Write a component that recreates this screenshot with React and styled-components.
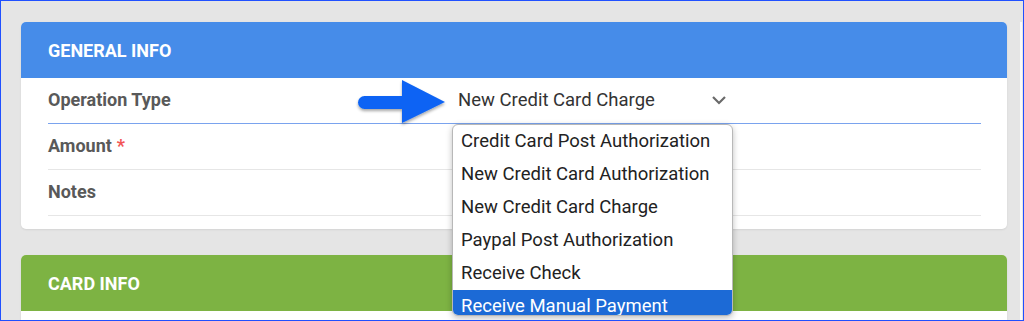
import React from "react";
import styled, { createGlobalStyle } from "styled-components";

const Global = createGlobalStyle`
  html, body { margin: 0; padding: 0; background: #e5e5e5; }
  * { box-sizing: border-box; }
  body { font-family: Roboto, "Noto Sans", "Liberation Sans", sans-serif; }
`;

const Frame = styled.div`
  width: 1024px;
  height: 321px;
  border: 1px solid #2050ff;
  background: #e5e5e5;
  overflow: hidden;
  display: flex;
`;

const Main = styled.div`
  flex: 1;
  padding: 21px 13px 0 20px;
  display: flex;
  flex-direction: column;
  gap: 26px;
`;

const ScrollStrip = styled.div`
  width: 2px;
  margin: 21px 1px 0 0;
  background: #fafafa;
`;

const Card = styled.section`
  background: #fff;
  border-radius: 5px;
  box-shadow: 0 1px 2px rgba(0, 0, 0, 0.08);
  padding-bottom: ${(p) => p.$pb || 0}px;
  flex-shrink: 0;
`;

const CardHeader = styled.header`
  height: 56px;
  border-radius: 5px 5px 0 0;
  background: ${(p) => p.$color};
  color: #fff;
  font-weight: 700;
  font-size: 18px;
  display: flex;
  align-items: center;
  padding-left: 27px;
`;

const CardBody = styled.div`
  padding: 0 26px 0 27px;
  min-height: ${(p) => p.$minH || 0}px;
`;

const Row = styled.div`
  height: 46px;
  display: grid;
  grid-template-columns: 404px 283px 1fr;
  align-items: center;
  padding-bottom: 2px;
  border-bottom: 1px solid ${(p) => (p.$active ? "#7aa3ee" : "#e6e6e6")};
  position: relative;
`;

const Label = styled.div`
  font-size: 18px;
  font-weight: 700;
  color: #595959;
`;

const Req = styled.span`
  color: #f25555;
  margin-left: 5px;
`;

const Select = styled.div`
  display: flex;
  align-items: center;
  justify-content: space-between;
  padding: 0 8px 0 6px;
  font-size: 18.5px;
  color: #333;
  position: relative;
`;

const Chevron = styled.svg`
  width: 16px;
  height: 12px;
`;

const Menu = styled.ul`
  position: absolute;
  top: 46px;
  left: 404px;
  width: 281px;
  max-height: 192px;
  overflow: hidden;
  margin: 0;
  padding: 0;
  list-style: none;
  background: #fff;
  border: 1px solid #b8b8b8;
  border-radius: 6px;
  box-shadow: 0 2px 6px rgba(0, 0, 0, 0.25);
  z-index: 5;
`;

const Item = styled.li`
  height: 33px;
  display: flex;
  align-items: center;
  padding: 0 0 2px 8px;
  font-size: 18.5px;
  color: ${(p) => (p.$selected ? "#fff" : "#222")};
  background: ${(p) => (p.$selected ? "#1c6ad6" : "transparent")};
`;

const Pointer = styled.svg`
  position: absolute;
  left: 310px;
  top: 2px;
  width: 96px;
  height: 50px;
  overflow: visible;
  z-index: 4;
`;

const items = [
  "Credit Card Post Authorization",
  "New Credit Card Authorization",
  "New Credit Card Charge",
  "Paypal Post Authorization",
  "Receive Check",
  "Receive Manual Payment",
];

export default function App() {
  return (
    <>
      <Global />
      <Frame>
        <Main>
          <Card $pb={13}>
            <CardHeader $color="#468ce9">GENERAL INFO</CardHeader>
            <CardBody>
              <Row $active>
                <Label>Operation Type</Label>
                <Select>
                  <span>New Credit Card Charge</span>
                  <Chevron viewBox="0 0 16 12">
                    <path d="M2 3 L8 9 L14 3" fill="none" stroke="#6a6a6a" strokeWidth="2.2" />
                  </Chevron>
                </Select>
                <Pointer viewBox="0 0 96 50">
                  <defs>
                    <filter id="sh" x="-20%" y="-20%" width="140%" height="160%">
                      <feDropShadow dx="0" dy="2" stdDeviation="1.5" floodColor="#000" floodOpacity="0.35" />
                    </filter>
                  </defs>
                  <g filter="url(#sh)" fill="#0b63f4">
                    <rect x="0" y="16" width="50" height="13" rx="6.5" />
                    <polygon points="44,0 87,22 44,43" />
                  </g>
                </Pointer>
                <Menu>
                  {items.map((t, i) => (
                    <Item key={t} $selected={i === items.length - 1}>
                      {t}
                    </Item>
                  ))}
                </Menu>
              </Row>
              <Row>
                <Label>
                  Amount<Req>*</Req>
                </Label>
              </Row>
              <Row>
                <Label>Notes</Label>
              </Row>
            </CardBody>
          </Card>
          <Card>
            <CardHeader $color="#7db343">CARD INFO</CardHeader>
            <CardBody $minH={20} />
          </Card>
        </Main>
        <ScrollStrip />
      </Frame>
    </>
  );
}
